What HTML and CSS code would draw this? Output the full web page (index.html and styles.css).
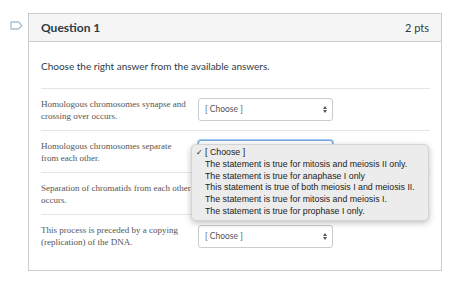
FILE: index.html
```html
<!DOCTYPE html>
<html lang="en">
<head>
    <meta charset="UTF-8">
    <title>Question 1</title>
    <link rel="stylesheet" href="styles.css">
</head>
<body>
    <div class="quiz">
        <div class="flag">
            <svg width="13" height="9" viewBox="0 0 13 9">
                <path d="M1 1 H8.5 L11.8 4.5 L8.5 8 H1 Z" fill="none" stroke="#a9bdd0" stroke-width="1.3" stroke-linejoin="round"/>
            </svg>
        </div>
        <div class="question">
            <div class="q-header">
                <span class="q-title">Question 1</span>
                <span class="q-pts">2 pts</span>
            </div>
            <div class="q-body">
                <p class="q-text">Choose the right answer from the available answers.</p>
                <div class="rows">
                    <div class="row">
                        <div class="label">Homologous chromosomes synapse and crossing over occurs.</div>
                        <div class="select">[ Choose ]<span class="arrows"></span></div>
                    </div>
                    <div class="row">
                        <div class="label">Homologous chromosomes separate from each other.</div>
                        <div class="select focused">
                            <ul class="menu">
                                <li class="checked">[ Choose ]</li>
                                <li>The statement is true for mitosis and meiosis II only.</li>
                                <li>The statement is true for anaphase I only</li>
                                <li>This statement is true of both meiosis I and meiosis II.</li>
                                <li>The statement is true for mitosis and meiosis I.</li>
                                <li>The statement is true for prophase I only.</li>
                            </ul>
                        </div>
                    </div>
                    <div class="row">
                        <div class="label">Separation of chromatids from each other occurs.</div>
                        <div class="select">[ Choose ]<span class="arrows"></span></div>
                    </div>
                    <div class="row">
                        <div class="label">This process is preceded by a copying (replication) of the DNA.</div>
                        <div class="select">[ Choose ]<span class="arrows"></span></div>
                    </div>
                </div>
            </div>
        </div>
    </div>
</body>
</html>
```

FILE: styles.css
```css
*{
    margin: 0;
    padding: 0;
    box-sizing: border-box;
}
body{
    background: #fff;
    font-family: Lato, "Liberation Sans", sans-serif;
    color: #2d3b45;
}
.quiz{
    display: flex;
    padding-top: 13px;
    padding-left: 10px;
}
.flag{
    width: 18px;
    padding-top: 8px;
}
.flag svg{
    display: block;
}
.question{
    width: 414px;
    border: 1px solid #c7cdd1;
}
.q-header{
    display: flex;
    justify-content: space-between;
    align-items: center;
    height: 28px;
    padding: 0 12px;
    background: #f5f5f5;
    border-bottom: 1px solid #c7cdd1;
}
.q-title{
    font-size: 12px;
    font-weight: bold;
}
.q-pts{
    font-size: 11px;
}
.q-body{
    padding: 17px 11px 13px 12px;
}
.q-text{
    font-size: 10px;
    line-height: 14px;
    padding-bottom: 15px;
    border-bottom: 1px solid #e3e6e8;
}
.row{
    display: flex;
    align-items: center;
    height: 42px;
    border-bottom: 1px solid #e3e6e8;
}
.row:last-child{
    border-bottom: none;
}
.label{
    width: 150px;
    margin-right: 7px;
    font-family: "Liberation Serif", serif;
    font-size: 9px;
    line-height: 12px;
    color: #555;
}
.select{
    position: relative;
    width: 135px;
    height: 23px;
    padding-left: 6px;
    border: 1px solid #c7cdd1;
    border-radius: 3px;
    background: #fff;
    font-size: 8.5px;
    line-height: 21px;
    color: #555;
}
.select.focused{
    border: 1px solid #6fa5e0;
    box-shadow: 0 0 0 1px #a8cbf0;
}
.arrows{
    position: absolute;
    right: 5px;
    top: 7px;
    width: 0;
    height: 0;
    border-left: 2px solid transparent;
    border-right: 2px solid transparent;
    border-bottom: 3px solid #555;
}
.arrows::after{
    content: "";
    position: absolute;
    left: -2px;
    top: 4px;
    border-left: 2px solid transparent;
    border-right: 2px solid transparent;
    border-top: 3px solid #555;
}
.menu{
    position: absolute;
    left: -8px;
    top: 3px;
    z-index: 2;
    width: 238px;
    padding: 2px 0 2px;
    list-style: none;
    background: #ececec;
    border: 1px solid #d4d4d4;
    border-radius: 5px;
    box-shadow: 0 2px 6px rgba(0,0,0,0.25);
    font-family: "Liberation Sans", sans-serif;
    font-size: 8.8px;
    line-height: 11.8px;
    color: #222;
}
.menu li{
    padding-left: 13px;
    white-space: nowrap;
}
.menu li.checked::before{
    content: "\2713";
    margin-left: -9px;
    margin-right: 2px;
    font-size: 8px;
}
```
